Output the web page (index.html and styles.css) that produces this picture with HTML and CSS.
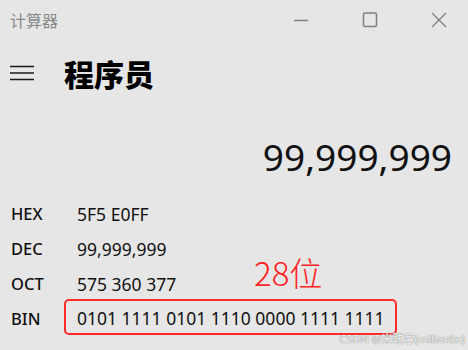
FILE: index.html
```html
<!DOCTYPE html>
<html lang="zh">
<head>
    <meta charset="UTF-8">
    <title>计算器</title>
    <link rel="stylesheet" href="styles.css">
</head>
<body>
    <div class="titlebar">
        <span class="app-name">计算器</span>
        <div class="controls">
            <span class="ctl">
                <svg width="16" height="16" viewBox="0 0 16 16"><path d="M1 8.5h14" stroke="#808080" stroke-width="1.5"/></svg>
            </span>
            <span class="ctl">
                <svg width="16" height="16" viewBox="0 0 16 16"><rect x="1.5" y="1" width="13" height="13.5" rx="1.5" fill="none" stroke="#808080" stroke-width="1.5"/></svg>
            </span>
            <span class="ctl">
                <svg width="16" height="16" viewBox="0 0 16 16"><path d="M1 1l14 14M15 1L1 15" stroke="#808080" stroke-width="1.3"/></svg>
            </span>
        </div>
    </div>

    <div class="header">
        <svg class="menu" width="24" height="16" viewBox="0 0 24 16"><path d="M0 1.5h24M0 8h24M0 14.5h24" stroke="#1a1a1a" stroke-width="1.6"/></svg>
        <h1>程序员</h1>
    </div>

    <div class="display">99,999,999</div>

    <div class="radix">
        <div class="row"><span class="label">HEX</span><span class="value">5F5 E0FF</span></div>
        <div class="row"><span class="label">DEC</span><span class="value">99,999,999</span></div>
        <div class="row"><span class="label">OCT</span><span class="value">575 360 377</span></div>
        <div class="row"><span class="label">BIN</span><span class="value boxed">0101 1111 0101 1110 0000 1111 1111</span></div>
    </div>

    <div class="note">28位</div>
    <div class="watermark">CSDN @米联客(milianke)</div>
</body>
</html>
```

FILE: styles.css
```css
body, html {
    margin: 0;
    padding: 0;
    width: 468px;
    height: 350px;
    overflow: hidden;
    background-color: #e6e6e6;
    font-family: "Noto Sans", "Noto Sans CJK SC", sans-serif;
    color: #111;
}

body {
    position: relative;
}

/* Titelleiste */
.titlebar {
    display: flex;
    align-items: center;
    justify-content: space-between;
    height: 40px;
    padding-left: 10px;
    margin-right: -5px;
}

.app-name {
    font-family: "Noto Sans CJK SC", sans-serif;
    font-size: 16px;
    color: #8a8a8a;
}

.controls {
    display: flex;
}

.ctl {
    width: 69px;
    height: 40px;
    display: flex;
    align-items: center;
    justify-content: center;
}

.header {
    display: flex;
    align-items: center;
    height: 70px;
    margin-top: -2px;
}

.menu {
    margin-left: 10px;
    margin-right: 30px;
}

h1 {
    margin: 0;
    font-family: "Noto Sans CJK SC", sans-serif;
    font-weight: 900;
    font-size: 30px;
    color: #000;
}

.display {
    text-align: right;
    padding-right: 16px;
    margin-top: 25px;
    font-size: 37px;
    line-height: 48px;
    color: #111;
}

.radix {
    margin-top: 15px;
}

.row {
    display: flex;
    align-items: center;
    height: 35px;
    font-size: 16.5px;
}

.label {
    width: 66px;
    padding-left: 11px;
    font-weight: 500;
}

.value {
    font-size: 17.5px;
    color: #111;
}

.boxed {
    margin-left: -13px;
    margin-top: -4px;
    padding: 4px 10px 2px 11px;
    border: 2.5px solid #ff2a2a;
    border-radius: 5px;
    line-height: 26px;
}

.note {
    position: absolute;
    left: 254px;
    top: 248px;
    font-family: "Noto Sans CJK SC", sans-serif;
    font-size: 33px;
    font-weight: 300;
    color: #ff2222;
}

.watermark {
    position: absolute;
    right: 3px;
    bottom: 4px;
    font-size: 11px;
    color: #f4f4f4;
    text-shadow: 0 0 1px #888, 0 0 1px #888;
}
```
